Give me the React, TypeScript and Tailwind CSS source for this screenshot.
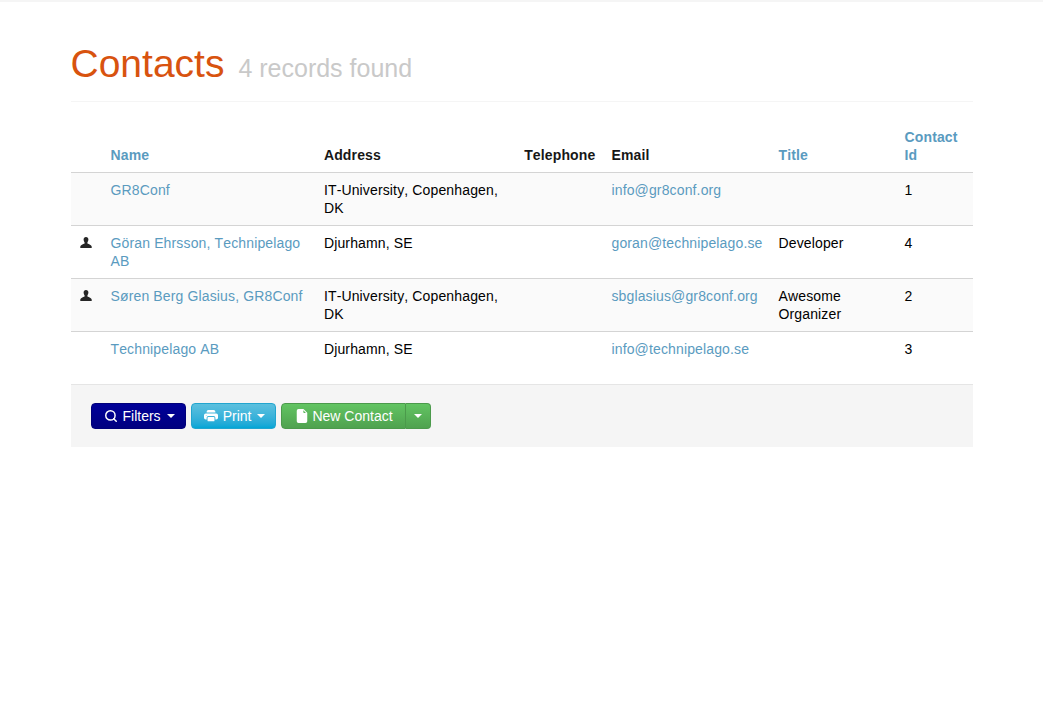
import { BsFileEarmarkFill, BsPrinterFill } from "react-icons/bs";
import { Search } from "lucide-react";

const contacts = [
  { name: "GR8Conf", address: "IT-University, Copenhagen, DK", email: "info@gr8conf.org", title: "", id: 1, person: false },
  { name: "Göran Ehrsson, Technipelago AB", address: "Djurhamn, SE", email: "goran@technipelago.se", title: "Developer", id: 4, person: true },
  { name: "Søren Berg Glasius, GR8Conf", address: "IT-University, Copenhagen, DK", email: "sbglasius@gr8conf.org", title: "Awesome Organizer", id: 2, person: true },
  { name: "Technipelago AB", address: "Djurhamn, SE", email: "info@technipelago.se", title: "", id: 3, person: false },
];

const linkColor = "text-[#5a9bbf]";

function Caret() {
  return <span className="inline-block border-x-4 border-t-4 border-x-transparent border-t-white" />;
}

function UserIcon() {
  return (
    <svg viewBox="0 -1 12 12" className="mt-0.5 ml-px size-3 fill-neutral-800">
      <path d="M6 0C4.5 0 3.6 1 3.6 2.6c0 1.2.5 2.2 1 2.8v1.2C3 7.3.6 8 .3 9.5V11h11.4V9.5C11.4 8 9 7.3 7.4 6.6V5.4c.5-.6 1-1.6 1-2.8C8.4 1 7.5 0 6 0z" />
    </svg>
  );
}

export default function App() {
  return (
    <div className="min-h-screen bg-white font-['Liberation_Sans',Arial,sans-serif] text-sm leading-4.5 text-black [font-kerning:none]">
      <div className="h-0.5 bg-neutral-100" />
      <div className="mx-auto w-[902px]">
        <div className="mt-10 flex items-baseline gap-3.5 border-b border-neutral-100 pb-3.25">
          <h1 className="text-[39px] leading-11 text-[#d8530f]">Contacts</h1>
          <span className="text-[25px] leading-10 text-[#c9c9c9]">4 records found</span>
        </div>

        <table className="mt-4.5 w-full border-collapse tracking-[0.01em]">
          <thead>
            <tr className="border-b border-neutral-300 text-left align-bottom font-bold text-neutral-900">
              <th className="w-8 p-2" />
              <th className={`p-2 ${linkColor}`}>Name</th>
              <th className="p-2">Address</th>
              <th className="p-2">Telephone</th>
              <th className="w-41.75 p-2">Email</th>
              <th className={`w-31.5 p-2 ${linkColor}`}>Title</th>
              <th className={`w-19 p-2 ${linkColor}`}>Contact Id</th>
            </tr>
          </thead>
          <tbody>
            {contacts.map((c) => (
              <tr key={c.id} className="border-b border-neutral-300 align-top odd:bg-neutral-50 last:border-0">
                <td className="p-2">{c.person && <UserIcon />}</td>
                <td className={`p-2 ${linkColor}`}>{c.name}</td>
                <td className="p-2">{c.address}</td>
                <td className="p-2" />
                <td className={`p-2 ${linkColor}`}>{c.email}</td>
                <td className="p-2">{c.title}</td>
                <td className="p-2">{c.id}</td>
              </tr>
            ))}
          </tbody>
        </table>

        <div className="mt-4.5 flex gap-1.25 border-t border-neutral-200 bg-neutral-100 px-5 py-4.5 text-white text-shadow-xs">
          <button className="flex h-6.5 items-center gap-1.5 rounded border border-[#00007a] bg-gradient-to-b from-[#000099] to-[#000080] pl-3.25 pr-2.5">
            <Search className="-mx-px size-3.5" strokeWidth={2.5} />
            Filters
            <Caret />
          </button>
          <button className="flex h-6.5 items-center gap-1.5 rounded border border-[#22a5cf] bg-gradient-to-b from-[#5bc0de] to-[#00a6d6] pl-3.25 pr-2.5">
            <BsPrinterFill className="-mx-px size-3.5" />
            Print
            <Caret />
          </button>
          <div className="flex">
            <button className="flex h-6.5 items-center gap-1 rounded-l border border-[#4b9a4b] bg-gradient-to-b from-[#62c462] to-[#4fa24f] pl-3.5 pr-3">
              <BsFileEarmarkFill className="-mx-px size-3.5" />
              New Contact
            </button>
            <button className="flex h-6.5 items-center rounded-r border border-l-0 border-[#4b9a4b] bg-gradient-to-b from-[#62c462] to-[#4fa24f] px-2">
              <Caret />
            </button>
          </div>
        </div>
      </div>
    </div>
  );
}
